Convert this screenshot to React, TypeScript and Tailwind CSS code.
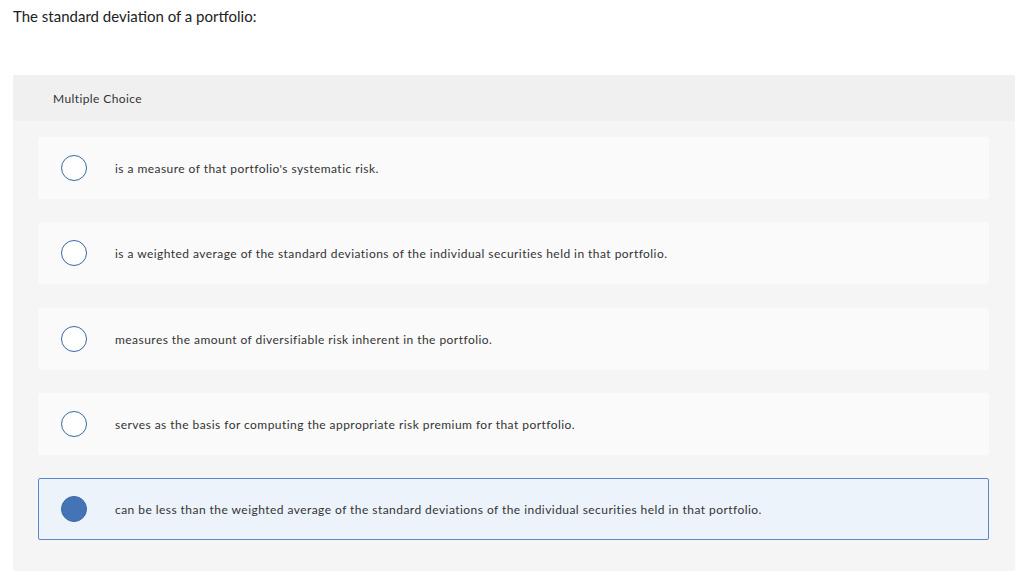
import React from 'react';

const options = [
  "is a measure of that portfolio's systematic risk.",
  'is a weighted average of the standard deviations of the individual securities held in that portfolio.',
  'measures the amount of diversifiable risk inherent in the portfolio.',
  'serves as the basis for computing the appropriate risk premium for that portfolio.',
  'can be less than the weighted average of the standard deviations of the individual securities held in that portfolio.',
];

const selected = 4;

const App: React.FC = () => {
  return (
    <div className="min-h-screen bg-white text-[#222] font-['Lato','Open_Sans',sans-serif]">
      <div className="px-[13px] pt-[6px]">
        <p className="text-[15px] leading-[20px]">The standard deviation of a portfolio:</p>
      </div>
      <div className="mx-[13px] mt-[49px] w-[1002px] rounded-[2px] bg-[#f5f5f5]">
        <div className="h-[46px] flex items-center px-[40px] pt-[2px] bg-[#f0f0f0] rounded-t-[2px]">
          <span className="text-[12px] tracking-[0.4px] text-[#333]">Multiple Choice</span>
        </div>
        <div className="flex flex-col gap-[23.3px] pl-[25px] pr-[26px] pt-[16px] pb-[31px]">
          {options.map((text, i) => {
            const isSel = i === selected;
            return (
              <div
                key={i}
                className={
                  isSel
                    ? 'h-[62px] flex items-center rounded-[2px] border border-[#5b86c8] bg-[#edf3fb]'
                    : 'h-[62px] flex items-center rounded-[2px] border border-transparent bg-[#fafafa]'
                }
              >
                <span
                  className={
                    isSel
                      ? 'ml-[22px] w-[26px] h-[26px] rounded-full bg-[#4473b6] border border-[#3b65a3] shrink-0'
                      : 'ml-[22px] w-[26px] h-[26px] rounded-full bg-white border-[1.5px] border-[#3b68a6] shrink-0'
                  }
                />
                <span className="ml-[28px] pt-[2px] text-[12px] tracking-[0.45px] text-[#333]">{text}</span>
              </div>
            );
          })}
        </div>
      </div>
    </div>
  );
};

export default App;
